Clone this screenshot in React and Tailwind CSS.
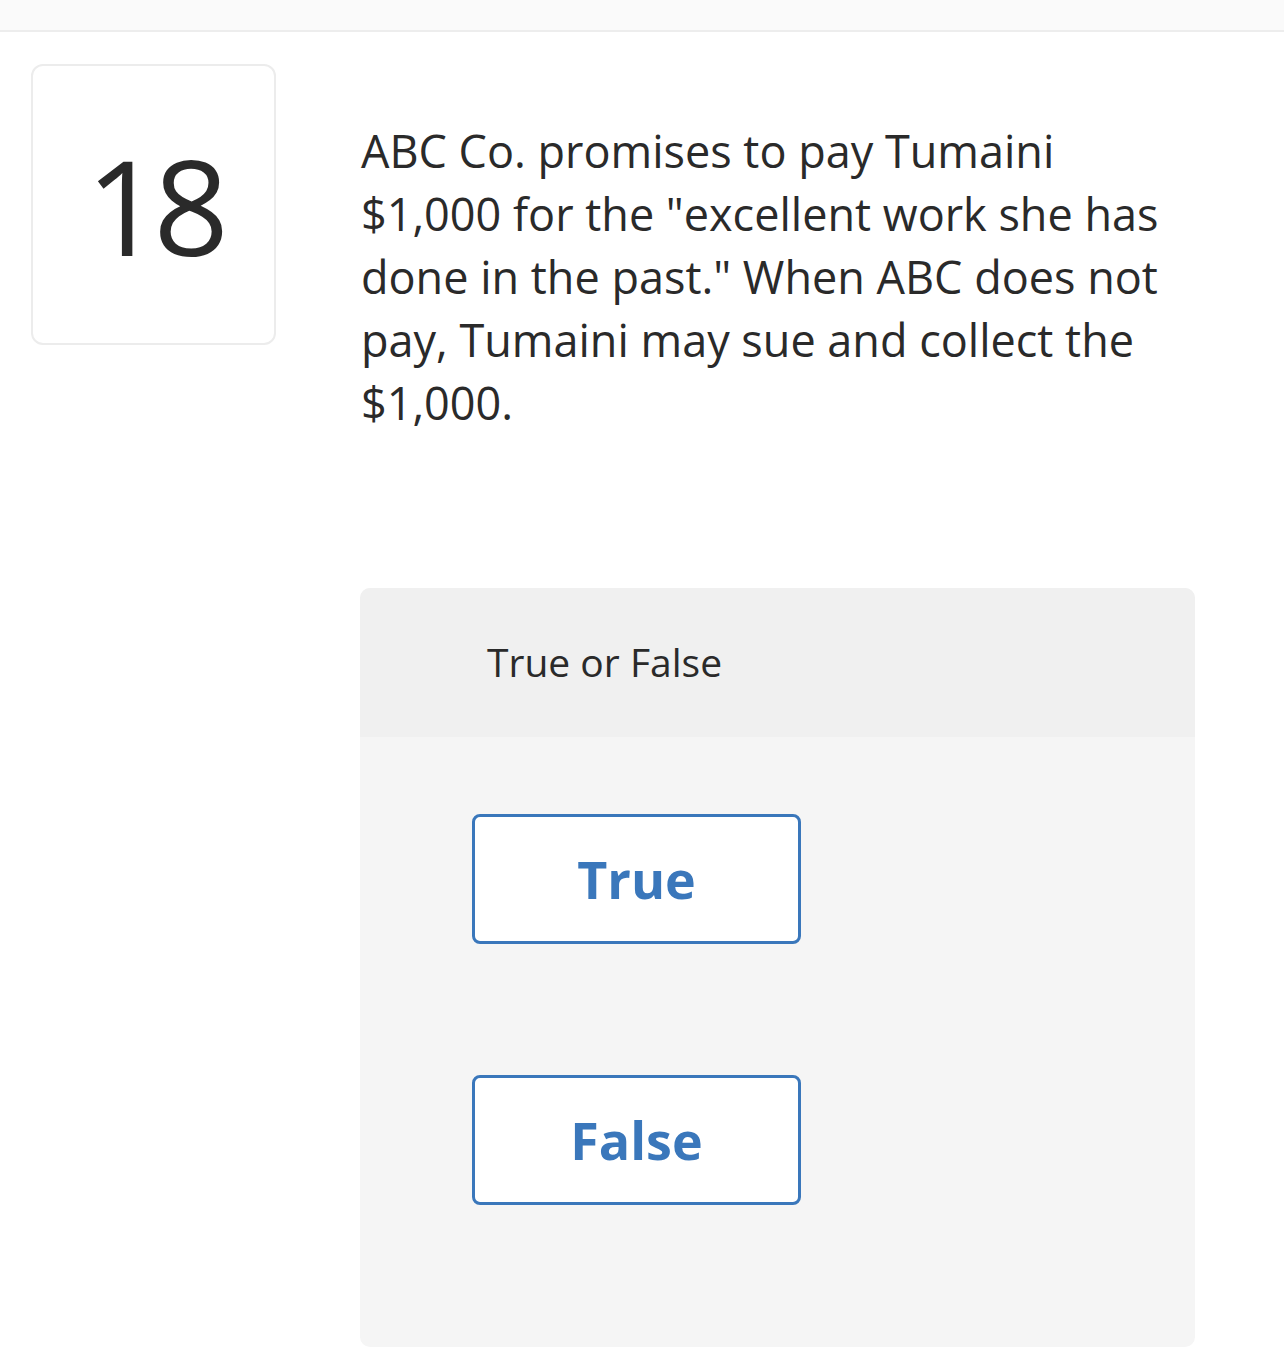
import React from 'react';

export default function App() {
  const font = { fontFamily: '"Open Sans", "Liberation Sans", sans-serif' };

  return (
    <div className="min-h-[1347px] bg-white text-[#2a2a2a]" style={font}>
      {/* top strip */}
      <div className="h-[32px] bg-[#fafafa] border-b-2 border-[#ededed]" />

      <div className="flex pt-[32px]">
        {/* question number */}
        <div className="ml-[31px] w-[245px] h-[281px] shrink-0 border-2 border-[#ececec] rounded-[12px] flex items-center justify-center">
          <span className="text-[132px] leading-none font-normal tracking-[-8px]">18</span>
        </div>

        <div className="ml-[84px] w-[835px]">
          <p className="mt-[55px] pl-px w-[823px] text-[45px] leading-[63px]">
            ABC Co. promises to pay Tumaini $1,000 for the "excellent work she has done in the past." When ABC does not pay, Tumaini may sue and collect the $1,000.
          </p>

          {/* answer panel */}
          <div className="mt-[154px] rounded-[10px] overflow-hidden bg-[#f5f5f5]">
            <div className="h-[149px] bg-[#f0f0f0] flex items-center pl-[127px]">
              <span className="text-[39px]">True or False</span>
            </div>
            <div className="pl-[112px] pt-[77px] pb-[142px] flex flex-col gap-[131px]">
              <button className="w-[329px] h-[130px] bg-white border-[3px] border-[#3a77bb] rounded-[8px] text-[52px] font-bold text-[#3a77bb]">
                True
              </button>
              <button className="w-[329px] h-[130px] bg-white border-[3px] border-[#3a77bb] rounded-[8px] text-[52px] font-bold text-[#3a77bb]">
                False
              </button>
            </div>
          </div>
        </div>
      </div>
    </div>
  );
}
